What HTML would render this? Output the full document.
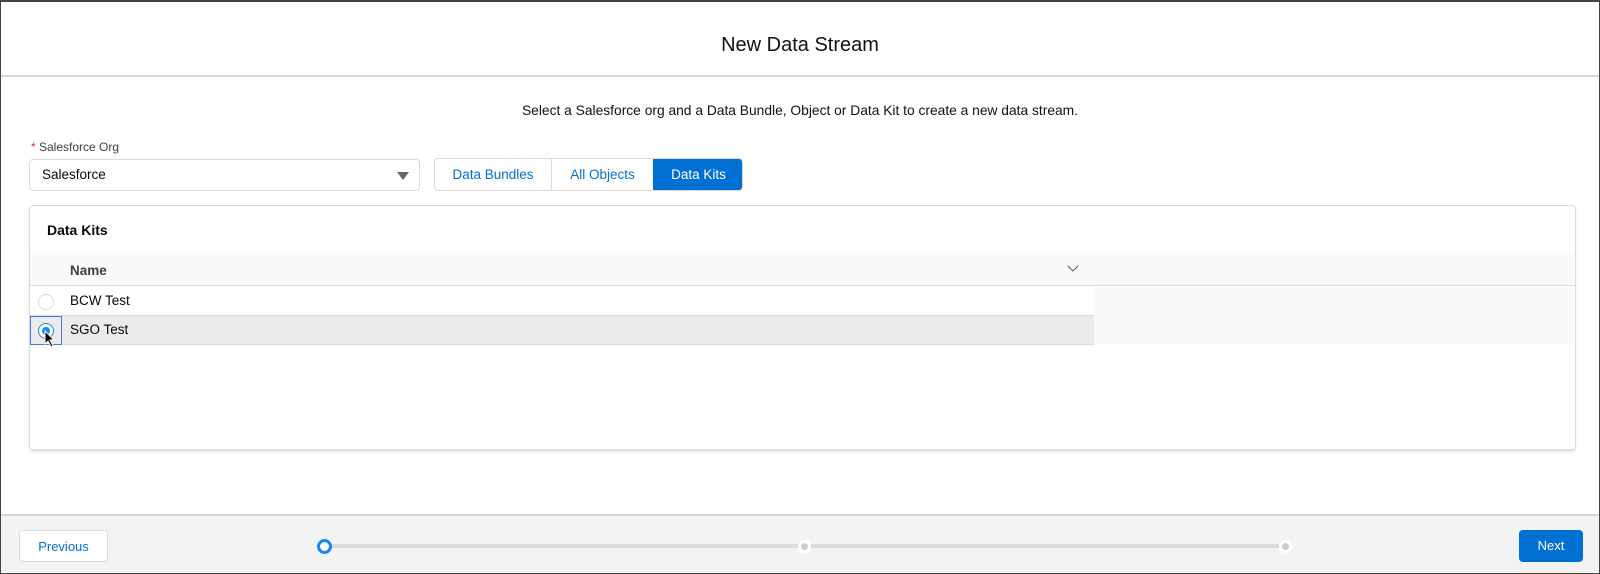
<!DOCTYPE html>
<html><head><style>
*{box-sizing:border-box;margin:0;padding:0}
body{width:1600px;height:574px;font-family:"Liberation Sans",sans-serif;background:#fff;position:relative;overflow:hidden;color:#080707}
.a{position:absolute}
</style></head><body>
<div class="a" style="left:0;top:0;width:1600px;height:574px;border:1px solid #444;border-top-width:2px"></div>
<div class="a" style="left:0;top:34px;width:1600px;text-align:center;font-size:20px;color:#111">New Data Stream</div>
<div class="a" style="left:1px;top:75px;width:1598px;height:2px;background:#d8d8d8"></div>
<div class="a" style="left:0;top:103px;width:1600px;text-align:center;font-size:13.8px;color:#111">Select a Salesforce org and a Data Bundle, Object or Data Kit to create a new data stream.</div>
<div class="a" style="left:31px;top:140px;font-size:12px;color:#3e3e3c"><span style="color:#c23934">*</span> Salesforce Org</div>
<div class="a" style="left:29px;top:159px;width:391px;height:32px;border:1px solid #dddbda;border-radius:4px;font-size:13.5px;padding:7px 0 0 12px">Salesforce<span class="a" style="right:10px;top:12px;width:0;height:0;border-left:6px solid transparent;border-right:6px solid transparent;border-top:8px solid #666"></span></div>
<div class="a" style="left:434px;top:158px;width:309px;height:33px;border:1px solid #dddbda;border-radius:4px;font-size:13.5px;color:#0070d2;overflow:hidden">
<div class="a" style="left:0;top:0;width:117px;height:31px;border-right:1px solid #dddbda;text-align:center;padding-top:8px">Data Bundles</div>
<div class="a" style="left:117px;top:0;width:101px;height:31px;text-align:center;padding-top:8px">All Objects</div>
<div class="a" style="left:218px;top:-1px;width:91px;height:33px;background:#0070d2;color:#fff;text-align:center;padding-top:9px">Data Kits</div>
</div>
<div class="a" style="left:29px;top:205px;width:1547px;height:245px;border:1px solid #dddbda;border-radius:4px;box-shadow:0 2px 2px rgba(0,0,0,.1)">
<div class="a" style="left:17px;top:16px;font-size:14px;font-weight:bold">Data Kits</div>
<div class="a" style="left:0;top:47px;width:1545px;height:33px;background:#fafaf9;border-bottom:1px solid #dddbda"></div>
<div class="a" style="left:40px;top:57px;font-size:13.5px;font-weight:bold;color:#3e3e3c">Name</div>
<div class="a" style="left:1039px;top:56px;width:8px;height:8px;border-right:1.5px solid #555;border-bottom:1.5px solid #555;transform:rotate(45deg)"></div>
<div class="a" style="left:1064px;top:81px;width:481px;height:58px;background:#fafaf9"></div>
<div class="a" style="left:0;top:81px;width:1064px;height:29px;border-bottom:1px solid #dddbda"></div>
<div class="a" style="left:8px;top:88px;width:16px;height:16px;border:1px solid #dddbda;border-radius:50%"></div>
<div class="a" style="left:40px;top:87px;font-size:13.5px">BCW Test</div>
<div class="a" style="left:0;top:110px;width:1064px;height:29px;background:#ebebeb;border-bottom:1px solid #dddbda"></div>
<div class="a" style="left:0;top:110px;width:32px;height:29px;border:1px solid #3c7ed8"></div>
<div class="a" style="left:8px;top:117px;width:16px;height:16px;border:1px solid #1589ee;border-radius:50%;background:#fff"><div class="a" style="left:3px;top:3px;width:8px;height:8px;border-radius:50%;background:#1589ee"></div></div>
<div class="a" style="left:40px;top:116px;font-size:13.5px">SGO Test</div>
<svg class="a" style="left:14px;top:124px" width="12" height="18"><path d="M1 1 L1 14 L4 11 L7 17 L9 16 L6 10 L10 10 Z" fill="#000" stroke="#fff" stroke-width="1"/></svg>
</div>
<div class="a" style="left:1px;top:514px;width:1598px;height:58px;background:#f3f3f3;border-top:2px solid #d4d4d4"></div>
<div class="a" style="left:19px;top:530px;width:89px;height:32px;background:#fff;border:1px solid #dddbda;border-radius:4px;font-size:13px;color:#0070d2;text-align:center;padding-top:8px">Previous</div>
<div class="a" style="left:1519px;top:530px;width:64px;height:32px;background:#0070d2;border-radius:4px;font-size:13px;color:#fff;text-align:center;padding-top:8px">Next</div>
<div class="a" style="left:326px;top:544px;width:960px;height:4px;background:#dddbda"></div>
<div class="a" style="left:317px;top:539px;width:15px;height:15px;border-radius:50%;background:#fff;border:3px solid #1589ee"></div>
<div class="a" style="left:798px;top:540px;width:13px;height:13px;border-radius:50%;background:#ccc;border:3px solid #fff"></div>
<div class="a" style="left:1279px;top:540px;width:13px;height:13px;border-radius:50%;background:#ccc;border:3px solid #fff"></div>
</body></html>
